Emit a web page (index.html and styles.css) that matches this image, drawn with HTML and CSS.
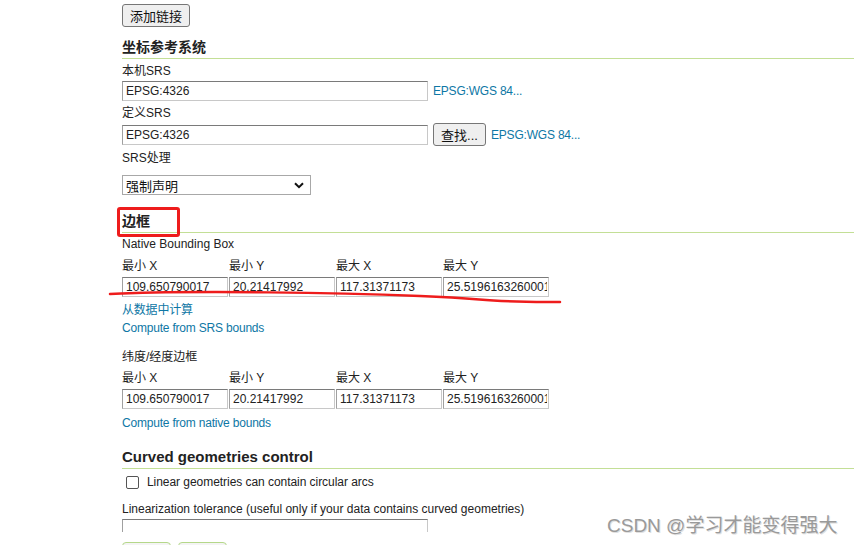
FILE: index.html
```html
<!DOCTYPE html>
<html lang="zh">
<head>
  <meta charset="UTF-8">
  <title>编辑图层</title>
  <link rel="stylesheet" href="styles.css">
</head>
<body>
  <div class="page">
    <button class="btn btn-add">添加链接</button>

    <h3 class="section first">坐标参考系统</h3>
    <div class="label l-native">本机SRS</div>
    <div class="row r-native">
      <input class="field wide" type="text" value="EPSG:4326">
      <a class="link" href="#">EPSG:WGS 84...</a>
    </div>
    <div class="label l-declared">定义SRS</div>
    <div class="row r-declared">
      <input class="field wide" type="text" value="EPSG:4326">
      <button class="btn btn-find">查找...</button>
      <a class="link" href="#">EPSG:WGS 84...</a>
    </div>
    <div class="label l-handling">SRS处理</div>
    <div class="select">
      <span>强制声明</span>
      <svg class="chev" width="10" height="7" viewBox="0 0 10 7"><path d="M1 1.2 L5 5.2 L9 1.2" fill="none" stroke="#111" stroke-width="2"/></svg>
    </div>

    <h3 class="section bbox-head">边框</h3>
    <div class="label l-nbb">Native Bounding Box</div>
    <div class="bbox labels l-bb1">
      <span>最小 X</span><span>最小 Y</span><span>最大 X</span><span>最大 Y</span>
    </div>
    <div class="bbox inputs i-bb1">
      <input class="field" type="text" value="109.650790017">
      <input class="field" type="text" value="20.21417992">
      <input class="field" type="text" value="117.31371173">
      <input class="field" type="text" value="25.519616326000107">
    </div>
    <div class="label l-fromdata"><a class="link" href="#">从数据中计算</a></div>
    <div class="label l-fromsrs"><a class="link" href="#">Compute from SRS bounds</a></div>

    <div class="label l-latlon">纬度/经度边框</div>
    <div class="bbox labels l-bb2">
      <span>最小 X</span><span>最小 Y</span><span>最大 X</span><span>最大 Y</span>
    </div>
    <div class="bbox inputs i-bb2">
      <input class="field" type="text" value="109.650790017">
      <input class="field" type="text" value="20.21417992">
      <input class="field" type="text" value="117.31371173">
      <input class="field" type="text" value="25.519616326000107">
    </div>
    <div class="label l-fromnative"><a class="link" href="#">Compute from native bounds</a></div>

    <h3 class="section curved-head">Curved geometries control</h3>
    <div class="check-row">
      <span class="checkbox"></span>
      <span>Linear geometries can contain circular arcs</span>
    </div>
    <div class="label l-tol">Linearization tolerance (useful only if your data contains curved geometries)</div>
    <div class="field cut"></div>
    <div class="bottom-buttons">
      <span class="gbtn"></span><span class="gbtn"></span>
    </div>
  </div>

  <!-- annotations drawn over the screenshot -->
  <div class="mark-box"></div>
  <svg class="mark-line" width="854" height="545" viewBox="0 0 854 545">
    <path d="M110 294 C 200 290, 340 293, 420 296 S 470 302, 560 302" fill="none" stroke="#ee1c1c" stroke-width="2.5" stroke-linecap="round"/>
  </svg>
  <div class="watermark">CSDN @学习才能变得强大</div>
</body>
</html>
```

FILE: styles.css
```css
html, body {
  margin: 0;
  height: 545px;
  overflow: hidden;
  background: #fff;
}

body {
  font-family: "Liberation Sans", "Noto Sans CJK SC", sans-serif;
  font-size: 12px;
  color: #222;
  position: relative;
}

.page {
  padding-left: 122px;
  padding-top: 4px;
}

.btn {
  font-family: inherit;
  font-size: 13px;
  color: #111;
  background: #efefef;
  border: 1px solid #767676;
  border-radius: 3px;
  padding: 0 6px;
  display: block;
}

.btn-add {
  height: 23px;
  width: 68px;
}

.btn-find {
  height: 23px;
  width: 53px;
  padding: 0;
  margin-left: 5px;
}

.section {
  margin: 0;
  font-size: 14px;
  font-weight: bold;
  line-height: 18px;
  padding-bottom: 2px;
  border-bottom: 1px solid #c3df96;
  color: #222;
}

.section.first { margin-top: 11px; }
.section.bbox-head { margin-top: 17px; }
.section.curved-head { margin-top: 17px; font-size: 15px; }

.label {
  line-height: 16px;
  margin-top: 4px;
}

.row {
  display: flex;
  align-items: center;
  margin-top: 2px;
}

.r-native { height: 20px; }
.r-declared { height: 23px; }

.field {
  box-sizing: border-box;
  height: 20px;
  font-family: inherit;
  font-size: 12px;
  color: #222;
  padding: 0 3px;
  border: 1px solid #c8c8c8;
  border-top-color: #7a7a7a;
  border-left-color: #a0a0a0;
  background: #fff;
  margin: 0;
}

.field.wide { width: 306px; }

.link {
  color: #0e77a5;
  text-decoration: none;
  margin-left: 5px;
  letter-spacing: -0.2px;
}

.label .link { margin-left: 0; }

.l-handling { margin-top: 4px; }

.select {
  box-sizing: border-box;
  margin-top: 9px;
  width: 189px;
  height: 20px;
  border: 1px solid #a8a8a8;
  display: flex;
  align-items: center;
  justify-content: space-between;
  padding: 0 6px 0 3px;
  font-size: 13px;
  color: #111;
}

.l-nbb { margin-top: 3px; }

.bbox {
  display: grid;
  grid-template-columns: repeat(4, 107px);
}

.bbox.labels { line-height: 16px; }
.l-bb1 { margin-top: 6px; }
.l-bb2 { margin-top: 5px; }

.bbox.inputs { margin-top: 3px; }
.i-bb2 { margin-top: 2px; }

.bbox .field {
  width: 106px;
  padding-right: 1px;
}

.l-fromdata { margin-top: 5px; }
.l-fromsrs { margin-top: 2px; }
.l-latlon { margin-top: 13px; }
.l-fromnative { margin-top: 6px; }

.check-row {
  display: flex;
  align-items: center;
  gap: 8px;
  margin-top: 5px;
  height: 16px;
  padding-left: 4px;
  letter-spacing: -0.05px;
}

.checkbox {
  width: 11px;
  height: 11px;
  border: 1px solid #555;
  border-radius: 2px;
}

.l-tol { margin-top: 11px; }

.field.cut {
  width: 306px;
  height: 13px;
  margin-top: 2px;
  border-bottom: none;
}

.bottom-buttons {
  display: flex;
  gap: 7px;
  margin-top: 10px;
}

.gbtn {
  width: 47px;
  height: 20px;
  border: 1px solid #b5d88a;
  border-radius: 4px;
  background: #f4f4f4;
}

.mark-box {
  position: absolute;
  left: 117px;
  top: 207px;
  width: 57px;
  height: 24px;
  border: 3px solid #ee1c1c;
  border-radius: 3px;
}

.mark-line {
  position: absolute;
  left: 0;
  top: 0;
  pointer-events: none;
}

.watermark {
  position: absolute;
  left: 607px;
  top: 515px;
  font-size: 19px;
  line-height: 22px;
  color: #9a9a9a;
  text-shadow: 1px 1px 0 #e0e0e0;
}
```
